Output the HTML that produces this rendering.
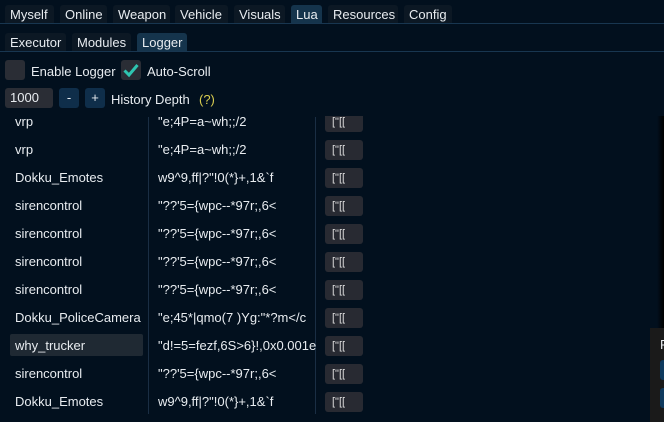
<!DOCTYPE html>
<html><head><meta charset="utf-8"><style>
*{margin:0;padding:0;box-sizing:border-box}
body{width:664px;height:422px;overflow:hidden;background:#02101e;font-family:"Liberation Sans",sans-serif;font-size:13px;color:#e8ecf0;position:relative}
.a{position:absolute;white-space:nowrap}
.tab{position:absolute;top:5px;height:18px;background:#0c1824;border-radius:3px 3px 0 0;line-height:19px;padding-left:5px}
.act{background:#15344c}
.line{position:absolute;left:0;width:664px;height:1px;background:#183650}
.box{position:absolute;background:#2a2d35;border-radius:3px}
.btn{position:absolute;background:#0f2e4a;border-radius:3px;text-align:center;line-height:20px}
.tb{position:absolute;left:325px;width:38px;height:20px;background:#282a32;border-radius:3px;font-size:11px;line-height:20px;padding-left:7px;color:#ddd}
</style></head><body>
<div class="tab" style="left:5px;width:49px">Myself</div>
<div class="tab" style="left:60px;width:47px">Online</div>
<div class="tab" style="left:113px;width:57px">Weapon</div>
<div class="tab" style="left:175px;width:53px">Vehicle</div>
<div class="tab" style="left:234px;width:51px">Visuals</div>
<div class="tab act" style="left:291px;width:31px">Lua</div>
<div class="tab" style="left:328px;width:70px">Resources</div>
<div class="tab" style="left:404px;width:48px">Config</div>
<div class="line" style="top:23px"></div>
<div class="tab" style="left:5px;top:33px;width:61px">Executor</div>
<div class="tab" style="left:72px;top:33px;width:59px">Modules</div>
<div class="tab act" style="left:137px;top:33px;width:50px">Logger</div>
<div class="line" style="top:51px"></div>
<div class="box" style="left:5px;top:60px;width:20px;height:20px"></div>
<div class="a" style="left:31px;top:64px">Enable Logger</div>
<div class="box" style="left:121px;top:60px;width:20px;height:20px"><svg width="20" height="20" viewBox="0 0 20 20"><path d="M3.5 10.5 L8 15 L16.5 5" stroke="#2ec4b0" stroke-width="3" fill="none"/></svg></div>
<div class="a" style="left:147px;top:64px">Auto-Scroll</div>
<div class="box" style="left:5px;top:88px;width:48px;height:20px;padding-left:5px;line-height:20px">1000</div>
<div class="btn" style="left:59px;top:88px;width:20px;height:20px">-</div>
<div class="btn" style="left:85px;top:88px;width:20px;height:20px">+</div>
<div class="a" style="left:111px;top:92px">History Depth</div>
<div class="a" style="left:199px;top:92px;color:#d8cc50">(?)</div>
<div class="a" style="left:0;top:116px;width:664px;height:306px;overflow:hidden">
<div class="a" style="left:148px;top:1px;width:1px;height:297px;background:#1a2e44"></div>
<div class="a" style="left:315px;top:1px;width:1px;height:297px;background:#1a2e44"></div>
<div class="a" style="left:10px;top:218px;width:133px;height:22px;background:#1f2933;border-radius:2px"></div>
<div id="rows"></div>
</div>
<div class="a" style="left:657px;top:116px;width:7px;height:212px;background:linear-gradient(90deg,#02101e,#000)"></div>
<div class="a" style="left:650px;top:328px;width:14px;height:94px;background:#1a1a1a"></div>
<div class="a" style="left:660px;top:337px;font-size:13px">F</div>
<div class="a" style="left:660px;top:360px;width:6px;height:20px;background:#0f3a5e;border-radius:3px 0 0 3px"></div>
<div class="a" style="left:660px;top:388px;width:6px;height:20px;background:#0f3a5e;border-radius:3px 0 0 3px"></div>
<script>
var d=[["vrp","\"e;4P=a~wh;;/2"],["vrp","\"e;4P=a~wh;;/2"],["Dokku_Emotes","w9^9,ff|?\"!0(*}+,1&`f"],["sirencontrol","\"??'5={wpc--*97r;,6<"],["sirencontrol","\"??'5={wpc--*97r;,6<"],["sirencontrol","\"??'5={wpc--*97r;,6<"],["sirencontrol","\"??'5={wpc--*97r;,6<"],["Dokku_PoliceCamera","\"e;45*|qmo(7 )Yg:\"*?m</c"],["why_trucker","\"d!=5=fezf,6S>6}!,0x0.001e"],["sirencontrol","\"??'5={wpc--*97r;,6<"],["Dokku_Emotes","w9^9,ff|?\"!0(*}+,1&`f"]];
var h="";d.forEach(function(r,i){var t=i*28-8;h+='<div class="a" style="left:15px;top:'+t+'px;line-height:28px">'+r[0].replace(/</g,"&lt;")+'</div><div class="a" style="left:158px;top:'+t+'px;line-height:28px">'+r[1].replace(/&/g,"&amp;").replace(/</g,"&lt;")+'</div><div class="tb" style="top:'+(t+4)+'px">["[[</div>';});
document.getElementById("rows").innerHTML=h;
</script>
</body></html>
